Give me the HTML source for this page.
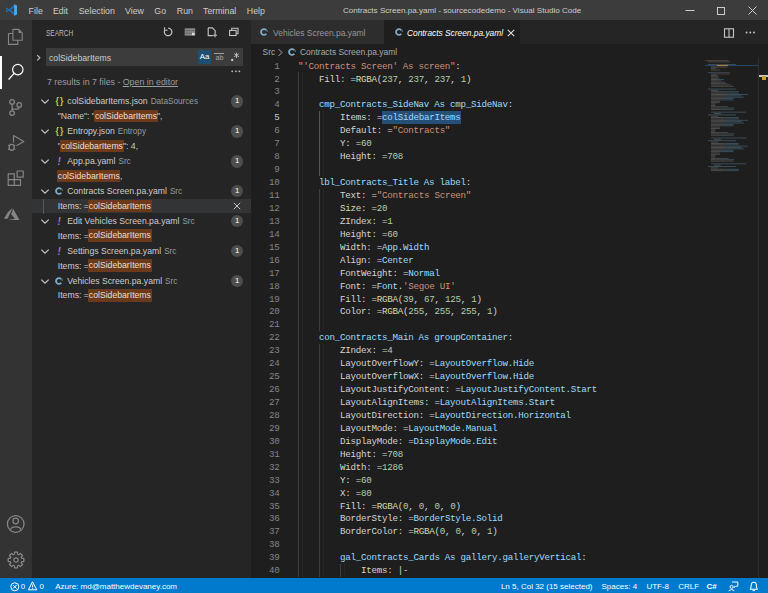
<!DOCTYPE html>
<html><head><meta charset="utf-8">
<style>
*{box-sizing:border-box}
html,body{margin:0;padding:0}
body{width:768px;height:593px;overflow:hidden;position:relative;background:#1e1e1e;font-family:"Liberation Sans",sans-serif;}
.a{position:absolute;white-space:nowrap}
#title{left:0;top:0;width:768px;height:20px;background:#3c3c3c}
.menu{position:absolute;top:0.7px;height:20px;line-height:20px;font-size:8.8px;color:#cccccc}
#act{left:0;top:20px;width:32px;height:558px;background:#333333}
#side{left:32px;top:20px;width:219px;height:558px;background:#252526}
#tabs{left:251px;top:20px;width:517px;height:23.5px;background:#252526}
#status{left:0;top:578px;width:768px;height:15px;background:#007acc}
.st{position:absolute;top:579px;height:15px;line-height:15px;font-size:8px;color:#ffffff}
.ln{position:absolute;left:252px;width:27.6px;text-align:right;height:12.94px;line-height:12.94px;font-family:"Liberation Mono",monospace;font-size:9.2px;letter-spacing:-0.27px;padding-top:1.3px;color:#858585}
.ln.act{color:#c6c6c6}
.cl{position:absolute;height:12.94px;line-height:12.94px;font-family:"Liberation Mono",monospace;font-size:9.2px;letter-spacing:-0.27px;padding-top:1.3px;white-space:pre;color:#d4d4d4}
.k{color:#9cdcfe}.w{color:#d4d4d4}.s{color:#ce9178}.n{color:#b5cea8}.f{color:#dcdcaa}
.g{position:absolute;width:1px;background:#3e3e3e}
.ga{position:absolute;width:1px;background:#555555}
.g2{position:absolute;width:1px;background:#262626}
.tr{position:absolute;left:32px;width:219px;height:15px;line-height:15px;font-size:8.67px;color:#cccccc;white-space:nowrap}
.desc{color:#9b9b9b;font-size:8.2px;margin-left:3px}
.hl{background:#6b3a1a;color:#eadfd5;padding:1.2px 0.6px;margin:0 -0.6px}
.badge{position:absolute;left:231px;width:12.4px;height:12.4px;border-radius:50%;background:#4d4d4d;color:#fff;font-size:7.8px;line-height:12.4px;text-align:center}
.chev{position:absolute;left:41px;top:0}
</style></head><body>
<!-- title bar -->
<div id="title" class="a"></div>
<svg class="a" style="left:5px;top:4.3px" width="13" height="12" viewBox="0 0 100 100">
 <path d="M77 3 L30 44 L11 29 L4 33 L4 67 L11 71 L30 56 L77 97 L77 72 L45 50 L77 28 Z M11 40 L21 50 L11 60 Z" fill="#1e6fb4" fill-rule="evenodd"/>
 <path d="M72 2 L96 12 L96 88 L72 98 Z" fill="#4ba6ea"/>
</svg>
<div class="menu" style="left:28.6px">File</div>
<div class="menu" style="left:52.9px">Edit</div>
<div class="menu" style="left:78.7px">Selection</div>
<div class="menu" style="left:125px">View</div>
<div class="menu" style="left:154.3px">Go</div>
<div class="menu" style="left:176.8px">Run</div>
<div class="menu" style="left:203px">Terminal</div>
<div class="menu" style="left:246.8px">Help</div>
<div class="menu" style="left:343px;font-size:8.1px">Contracts Screen.pa.yaml - sourcecodedemo - Visual Studio Code</div>
<svg class="a" style="left:680px;top:0" width="88" height="20">
 <line x1="5.5" y1="10.5" x2="14.5" y2="10.5" stroke="#cccccc" stroke-width="1"/>
 <rect x="37.5" y="7.5" width="7" height="7" fill="none" stroke="#cccccc" stroke-width="1"/>
 <path d="M68.5 6.5 L76.5 14.5 M76.5 6.5 L68.5 14.5" stroke="#cccccc" stroke-width="1"/>
</svg>

<!-- activity bar -->
<div id="act" class="a"></div>
<div class="a" style="left:0;top:56px;width:1.5px;height:32.5px;background:#ffffff"></div>
<svg class="a" style="left:0;top:20px" width="32" height="560" viewBox="0 20 32 560" fill="none" stroke="#858585" stroke-width="1.1">
 <!-- explorer -->
 <path d="M12.9 29.4 H18.8 L22.2 32.8 V40.2 H12.9 Z" stroke-linejoin="round"/><path d="M18.5 29.6 L22 33 H18.5 Z" fill="#858585" stroke="none"/>
 <path d="M12.9 33.5 H8.5 V44.4 H17.8 V40.2" stroke-linejoin="round"/>
 <!-- search (active) -->
 <g stroke="#ffffff" stroke-width="1.2"><circle cx="17.8" cy="69.6" r="5.2"/><path d="M14.1 73.3 L8.6 79.5"/></g>
 <!-- source control -->
 <g stroke-width="1.3"><circle cx="12.1" cy="101.9" r="2.3"/><circle cx="12.1" cy="113.1" r="2.3"/><circle cx="19.2" cy="104.9" r="2.3"/>
 <path d="M12.1 104.2 V110.8 M19.2 107.2 V107.6 Q19.2 109.2 17.4 109.2 H13.9 Q12.1 109.2 12.1 110.8"/></g>
 <!-- run debug -->
 <path d="M13.5 142.5 V135.5 L23.8 141.5 L16.5 145.8" stroke-width="1.2" stroke-linejoin="round"/>
 <ellipse cx="11.7" cy="147.3" rx="2.6" ry="3" stroke-width="1.3"/><path d="M8 145 L9.5 146 M8 149.5 L9.3 148.8 M15.4 145 L13.9 146 M15.4 149.5 L14.1 148.8 M10 143.8 L11 144.8 M13.4 143.8 L12.4 144.8" stroke-width="1"/>
 <!-- extensions -->
 <path d="M8.2 173.8 H14.3 V185.3 H8.2 Z M8.2 179.6 H20.5 V185.3 H14.3 M17.1 171 H23.2 V177.1 H17.1 Z" stroke-width="1.2" stroke-linejoin="round"/>
 <!-- account -->
 <g stroke-width="1.3"><circle cx="15.7" cy="524" r="8.3"/><circle cx="15.7" cy="521" r="2.8"/>
 <path d="M10.6 529.7 C11.5 526 19.9 526 20.8 529.7"/></g>
</svg>
<svg class="a" style="left:4px;top:207.8px" width="15.6" height="12.1" viewBox="0 2.7 24 18.6">
 <path d="M5.483 21.3H24L14.025 4.013l-3.038 8.347 5.836 6.938L5.483 21.3zM13.23 2.7L6.105 8.677 0 19.253h5.505v.014L13.23 2.7z" fill="#858585"/>
</svg>
<svg class="a" style="left:5.5px;top:549.8px" width="20" height="20" viewBox="0 0 20 20">
 <path d="M15.80 8.45 L17.85 8.47 L17.85 11.53 L15.80 11.55 L15.20 13.00 L16.63 14.47 L14.47 16.63 L13.00 15.20 L11.55 15.80 L11.53 17.85 L8.47 17.85 L8.45 15.80 L7.00 15.20 L5.53 16.63 L3.37 14.47 L4.80 13.00 L4.20 11.55 L2.15 11.53 L2.15 8.47 L4.20 8.45 L4.80 7.00 L3.37 5.53 L5.53 3.37 L7.00 4.80 L8.45 4.20 L8.47 2.15 L11.53 2.15 L11.55 4.20 L13.00 4.80 L14.47 3.37 L16.63 5.53 L15.20 7.00 Z" fill="none" stroke="#858585" stroke-width="1.2" stroke-linejoin="round"/>
 <circle cx="10" cy="10" r="2.2" fill="none" stroke="#858585" stroke-width="1.2"/>
</svg>

<!-- sidebar -->
<div id="side" class="a"></div>
<div class="a" style="left:45.7px;top:26.4px;height:14px;line-height:14px;font-size:8.7px;color:#bbbbbb;transform:scaleX(0.75);transform-origin:0 0">SEARCH</div>
<svg class="a" style="left:160px;top:25px" width="85" height="16" viewBox="0 0 85 16" fill="none" stroke="#c5c5c5" stroke-width="1.2">
 <path d="M8.2 3.1 A3.8 3.8 0 1 1 4.9 4.9"/><path d="M4.6 2.2 V5.3 H7.6" stroke-width="1.1"/>
 <rect x="24.7" y="3.3" width="10.5" height="7.3" fill="#8a8a8a" stroke="none"/>
 <path d="M24.7 5.7 H35.2 M24.7 8.2 H35.2" stroke="#5a5a5a" stroke-width="0.8"/>
 <rect x="32" y="7.8" width="2.6" height="2.4" fill="#e0e0e0" stroke="none"/>
 <path d="M48.2 2.9 H52.4 L55.2 5.7 V8.4 M52.8 10.6 H48.2 V2.9" stroke-width="1.1"/><path d="M55 8.2 V12.2 M53 10.2 H57" stroke-width="1.1"/>
 <path d="M71.7 5.3 V3.3 H78 V8.8 H76.2" stroke-width="1.1"/><rect x="69.6" y="5.4" width="6.5" height="5.1" stroke-width="1.1"/>
</svg>
<svg class="a" style="left:34px;top:53px" width="10" height="10" viewBox="0 0 10 10"><path d="M3.2 2.2 L5.9 4.8 L3.2 7.4" fill="none" stroke="#c5c5c5" stroke-width="1.1"/></svg>
<div class="a" style="left:45.5px;top:48px;width:197.5px;height:17.5px;background:#3c3c3c"></div>
<div class="a" style="left:49px;top:49.6px;height:17.5px;line-height:17.5px;font-size:8.67px;color:#cccccc">colSidebarItems</div>
<div class="a" style="left:197.5px;top:49.5px;width:13.5px;height:14px;background:#1f4f70"></div>
<div class="a" style="left:198.5px;top:49px;width:12px;height:15px;line-height:15px;font-size:7.8px;color:#ffffff;text-align:center">Aa</div>
<div class="a" style="left:214px;top:53px;width:10px;height:1px;background:#a0a0a0"></div>
<div class="a" style="left:214px;top:49px;width:11px;height:14px;line-height:14px;font-size:7.2px;color:#a8a8a8;text-align:center;padding-top:1.5px">ab</div>
<svg class="a" style="left:228px;top:51px" width="14" height="12"><circle cx="4.2" cy="9" r="1.2" fill="#c5c5c5"/><path d="M8.5 1.5 V7 M6.2 2.8 L10.8 5.7 M10.8 2.8 L6.2 5.7" stroke="#c5c5c5" stroke-width="0.9"/></svg>
<svg class="a" style="left:229px;top:69px" width="14" height="5"><circle cx="3.2" cy="2.3" r="0.9" fill="#c5c5c5"/><circle cx="7" cy="2.3" r="0.9" fill="#c5c5c5"/><circle cx="10.4" cy="2.3" r="0.9" fill="#c5c5c5"/></svg>
<div class="a" style="left:47px;top:75px;height:15px;line-height:15px;font-size:8.8px;color:#9d9d9d">7 results in 7 files - <span style="color:#9d9d9d;text-decoration:underline">Open in editor</span></div>

<svg class="a" style="left:40px;top:96.98px" width="10" height="9" viewBox="0 0 10 9"><path d="M1.3 2.6 L5 6.2 L8.7 2.6" fill="none" stroke="#c5c5c5" stroke-width="1.25"/></svg>
<div class="a" style="left:55.5px;top:93.98px;height:15px;line-height:15px;font-size:8.5px;font-weight:bold;letter-spacing:1.2px;color:#cbcb41">{}</div>
<div class="tr" style="left:67.3px;top:94.00px">colSidebarItems.json<span class="desc">DataSources</span></div>
<div class="badge" style="top:95.28px">1</div>
<div class="tr" style="left:57.8px;top:108.96px">"Name": "<span class="hl">colSidebarItems</span>",</div>
<svg class="a" style="left:40px;top:126.90px" width="10" height="9" viewBox="0 0 10 9"><path d="M1.3 2.6 L5 6.2 L8.7 2.6" fill="none" stroke="#c5c5c5" stroke-width="1.25"/></svg>
<div class="a" style="left:55.5px;top:123.90px;height:15px;line-height:15px;font-size:8.5px;font-weight:bold;letter-spacing:1.2px;color:#cbcb41">{}</div>
<div class="tr" style="left:67.3px;top:123.92px">Entropy.json<span class="desc">Entropy</span></div>
<div class="badge" style="top:125.20px">1</div>
<div class="tr" style="left:57.8px;top:138.88px">"<span class="hl">colSidebarItems</span>": 4,</div>
<svg class="a" style="left:40px;top:156.82px" width="10" height="9" viewBox="0 0 10 9"><path d="M1.3 2.6 L5 6.2 L8.7 2.6" fill="none" stroke="#c5c5c5" stroke-width="1.25"/></svg>
<div class="a" style="left:57.5px;top:153.82px;height:15px;line-height:15px;font-size:10px;font-style:italic;font-weight:bold;color:#a074c4">!</div>
<div class="tr" style="left:67.3px;top:153.84px">App.pa.yaml<span class="desc">Src</span></div>
<div class="badge" style="top:155.12px">1</div>
<div class="tr" style="left:57.8px;top:168.80px"><span class="hl">colSidebarItems</span>,</div>
<svg class="a" style="left:40px;top:186.74px" width="10" height="9" viewBox="0 0 10 9"><path d="M1.3 2.6 L5 6.2 L8.7 2.6" fill="none" stroke="#c5c5c5" stroke-width="1.25"/></svg>
<svg class="a" style="left:53.60px;top:186.24px" width="10" height="10" viewBox="0 0 10 10"><path d="M7.3 3.3 A2.9 2.9 0 1 0 7.3 6.7" fill="none" stroke="#7fa9c4" stroke-width="1.9"/><rect x="7.6" y="3.4" width="1.3" height="1.2" fill="#6f98b2"/></svg>
<div class="tr" style="left:67.3px;top:183.76px">Contracts Screen.pa.yaml<span class="desc">Src</span></div>
<div class="badge" style="top:185.04px">1</div>
<div class="a" style="left:32px;top:198.52px;width:219px;height:14.9px;background:#333436"></div>
<div class="a" style="left:43px;top:198.72px;width:1px;height:15px;background:#585858"></div>
<svg class="a" style="left:232.5px;top:202.22px" width="8" height="8" viewBox="0 0 8 8"><path d="M0.8 0.8 L7.2 7.2 M7.2 0.8 L0.8 7.2" stroke="#c5c5c5" stroke-width="1"/></svg>
<div class="tr" style="left:57.8px;top:198.72px">Items: =<span class="hl">colSidebarItems</span></div>
<svg class="a" style="left:40px;top:216.66px" width="10" height="9" viewBox="0 0 10 9"><path d="M1.3 2.6 L5 6.2 L8.7 2.6" fill="none" stroke="#c5c5c5" stroke-width="1.25"/></svg>
<div class="a" style="left:57.5px;top:213.66px;height:15px;line-height:15px;font-size:10px;font-style:italic;font-weight:bold;color:#a074c4">!</div>
<div class="tr" style="left:67.3px;top:213.68px">Edit Vehicles Screen.pa.yaml<span class="desc">Src</span></div>
<div class="badge" style="top:214.96px">1</div>
<div class="tr" style="left:57.8px;top:228.64px">Items: =<span class="hl">colSidebarItems</span></div>
<svg class="a" style="left:40px;top:246.58px" width="10" height="9" viewBox="0 0 10 9"><path d="M1.3 2.6 L5 6.2 L8.7 2.6" fill="none" stroke="#c5c5c5" stroke-width="1.25"/></svg>
<div class="a" style="left:57.5px;top:243.58px;height:15px;line-height:15px;font-size:10px;font-style:italic;font-weight:bold;color:#a074c4">!</div>
<div class="tr" style="left:67.3px;top:243.60px">Settings Screen.pa.yaml<span class="desc">Src</span></div>
<div class="badge" style="top:244.88px">1</div>
<div class="tr" style="left:57.8px;top:258.56px">Items: =<span class="hl">colSidebarItems</span></div>
<svg class="a" style="left:40px;top:276.50px" width="10" height="9" viewBox="0 0 10 9"><path d="M1.3 2.6 L5 6.2 L8.7 2.6" fill="none" stroke="#c5c5c5" stroke-width="1.25"/></svg>
<svg class="a" style="left:53.60px;top:276.00px" width="10" height="10" viewBox="0 0 10 10"><path d="M7.3 3.3 A2.9 2.9 0 1 0 7.3 6.7" fill="none" stroke="#7fa9c4" stroke-width="1.9"/><rect x="7.6" y="3.4" width="1.3" height="1.2" fill="#6f98b2"/></svg>
<div class="tr" style="left:67.3px;top:273.52px">Vehicles Screen.pa.yaml<span class="desc">Src</span></div>
<div class="badge" style="top:274.80px">1</div>
<div class="tr" style="left:57.8px;top:288.48px">Items: =<span class="hl">colSidebarItems</span></div>

<!-- tabs -->
<div id="tabs" class="a"></div>
<div class="a" style="left:251px;top:20px;width:133.4px;height:23.5px;background:#2d2d2d"></div>
<div class="a" style="left:384.4px;top:20px;width:136px;height:23.5px;background:#1e1e1e"></div>

<svg class="a" style="left:259.30px;top:27.00px" width="10" height="10" viewBox="0 0 10 10"><path d="M7.3 3.3 A2.9 2.9 0 1 0 7.3 6.7" fill="none" stroke="#7fa9c4" stroke-width="1.9"/><rect x="7.6" y="3.4" width="1.3" height="1.2" fill="#6f98b2"/></svg>
<div class="a" style="left:273.1px;top:25px;height:16px;line-height:16px;font-size:8.45px;color:#969696">Vehicles Screen.pa.yaml</div>
<svg class="a" style="left:393.60px;top:27.00px" width="10" height="10" viewBox="0 0 10 10"><path d="M7.3 3.3 A2.9 2.9 0 1 0 7.3 6.7" fill="none" stroke="#7fa9c4" stroke-width="1.9"/><rect x="7.6" y="3.4" width="1.3" height="1.2" fill="#6f98b2"/></svg>
<div class="a" style="left:407px;top:25px;height:16px;line-height:16px;font-size:8.35px;font-style:italic;color:#ffffff">Contracts Screen.pa.yaml</div>
<svg class="a" style="left:506.8px;top:29px" width="8" height="8" viewBox="0 0 8 8"><path d="M0.8 0.8 L7.2 7.2 M7.2 0.8 L0.8 7.2" stroke="#dddddd" stroke-width="1.15"/></svg>
<svg class="a" style="left:723px;top:27.5px" width="12" height="10" viewBox="0 0 12 10"><rect x="1.5" y="0.8" width="9" height="8.4" fill="none" stroke="#c5c5c5" stroke-width="1.1"/><path d="M6 0.8 V9.2" stroke="#c5c5c5" stroke-width="1.1"/></svg>

<div class="a" style="left:262.6px;top:44.5px;height:15px;line-height:15px;font-size:8.45px;color:#a9a9a9">Src</div>
<svg class="a" style="left:277px;top:48px" width="7" height="9" viewBox="0 0 7 9"><path d="M1.5 1 L5 4.5 L1.5 8" fill="none" stroke="#a9a9a9" stroke-width="1"/></svg>
<svg class="a" style="left:286.80px;top:46.80px" width="10" height="10" viewBox="0 0 10 10"><path d="M7.3 3.3 A2.9 2.9 0 1 0 7.3 6.7" fill="none" stroke="#7fa9c4" stroke-width="1.9"/><rect x="7.6" y="3.4" width="1.3" height="1.2" fill="#6f98b2"/></svg>
<div class="a" style="left:300px;top:44.5px;height:15px;line-height:15px;font-size:8.45px;color:#a9a9a9">Contracts Screen.pa.yaml</div>

<svg class="a" style="left:744px;top:30px" width="14" height="5"><circle cx="2.6" cy="2.5" r="0.95" fill="#c5c5c5"/><circle cx="6.3" cy="2.5" r="0.95" fill="#c5c5c5"/><circle cx="10" cy="2.5" r="0.95" fill="#c5c5c5"/></svg>

<!-- editor -->
<div class="g" style="left:297.50px;top:72.24px;height:504.66px"></div>
<div class="g2" style="left:302.00px;top:72.24px;height:504.66px"></div>
<div class="ga" style="left:318.50px;top:111.06px;height:64.70px"></div>
<div class="g2" style="left:323.00px;top:111.06px;height:64.70px"></div>
<div class="g" style="left:318.50px;top:188.70px;height:142.34px"></div>
<div class="g2" style="left:323.00px;top:188.70px;height:142.34px"></div>
<div class="g" style="left:318.50px;top:343.98px;height:232.92px"></div>
<div class="g2" style="left:323.00px;top:343.98px;height:232.92px"></div>
<div class="g" style="left:339.50px;top:563.96px;height:12.94px"></div>
<div class="g2" style="left:344.00px;top:563.96px;height:12.94px"></div>
<div class="a" style="left:382px;top:111.1px;width:78.75px;height:12.94px;background:#264f78"></div>
<div class="ln" style="top:59.30px">1</div>
<div class="cl" style="top:59.30px;left:298.00px"><span class="s">"'Contracts Screen' As screen"</span><span class="w">:</span></div>
<div class="ln" style="top:72.24px">2</div>
<div class="cl" style="top:72.24px;left:319.00px"><span class="w">Fill: </span><span class="w">=</span><span class="f">RGBA</span><span class="w">(</span><span class="n">237</span><span class="w">, </span><span class="n">237</span><span class="w">, </span><span class="n">237</span><span class="w">, </span><span class="n">1</span><span class="w">)</span></div>
<div class="ln" style="top:85.18px">3</div>
<div class="ln" style="top:98.12px">4</div>
<div class="cl" style="top:98.12px;left:319.00px"><span class="k">cmp_Contracts_SideNav As cmp_SideNav</span><span class="w">:</span></div>
<div class="ln act" style="top:111.06px">5</div>
<div class="cl" style="top:111.06px;left:340.00px"><span class="w">Items: =</span><span class="k">colSidebarItems</span></div>
<div class="ln" style="top:124.00px">6</div>
<div class="cl" style="top:124.00px;left:340.00px"><span class="w">Default: =</span><span class="s">"Contracts"</span></div>
<div class="ln" style="top:136.94px">7</div>
<div class="cl" style="top:136.94px;left:340.00px"><span class="w">Y: =</span><span class="n">60</span></div>
<div class="ln" style="top:149.88px">8</div>
<div class="cl" style="top:149.88px;left:340.00px"><span class="w">Height: =</span><span class="n">708</span></div>
<div class="ln" style="top:162.82px">9</div>
<div class="ln" style="top:175.76px">10</div>
<div class="cl" style="top:175.76px;left:319.00px"><span class="k">lbl_Contracts_Title As label</span><span class="w">:</span></div>
<div class="ln" style="top:188.70px">11</div>
<div class="cl" style="top:188.70px;left:340.00px"><span class="w">Text: =</span><span class="s">"Contracts Screen"</span></div>
<div class="ln" style="top:201.64px">12</div>
<div class="cl" style="top:201.64px;left:340.00px"><span class="w">Size: =</span><span class="n">20</span></div>
<div class="ln" style="top:214.58px">13</div>
<div class="cl" style="top:214.58px;left:340.00px"><span class="w">ZIndex: =</span><span class="n">1</span></div>
<div class="ln" style="top:227.52px">14</div>
<div class="cl" style="top:227.52px;left:340.00px"><span class="w">Height: =</span><span class="n">60</span></div>
<div class="ln" style="top:240.46px">15</div>
<div class="cl" style="top:240.46px;left:340.00px"><span class="w">Width: =</span><span class="k">App.Width</span></div>
<div class="ln" style="top:253.40px">16</div>
<div class="cl" style="top:253.40px;left:340.00px"><span class="w">Align: =</span><span class="k">Center</span></div>
<div class="ln" style="top:266.34px">17</div>
<div class="cl" style="top:266.34px;left:340.00px"><span class="w">FontWeight: =</span><span class="k">Normal</span></div>
<div class="ln" style="top:279.28px">18</div>
<div class="cl" style="top:279.28px;left:340.00px"><span class="w">Font: =</span><span class="k">Font</span><span class="w">.</span><span class="s">'Segoe UI'</span></div>
<div class="ln" style="top:292.22px">19</div>
<div class="cl" style="top:292.22px;left:340.00px"><span class="w">Fill: </span><span class="w">=</span><span class="f">RGBA</span><span class="w">(</span><span class="n">39</span><span class="w">, </span><span class="n">67</span><span class="w">, </span><span class="n">125</span><span class="w">, </span><span class="n">1</span><span class="w">)</span></div>
<div class="ln" style="top:305.16px">20</div>
<div class="cl" style="top:305.16px;left:340.00px"><span class="w">Color: </span><span class="w">=</span><span class="f">RGBA</span><span class="w">(</span><span class="n">255</span><span class="w">, </span><span class="n">255</span><span class="w">, </span><span class="n">255</span><span class="w">, </span><span class="n">1</span><span class="w">)</span></div>
<div class="ln" style="top:318.10px">21</div>
<div class="ln" style="top:331.04px">22</div>
<div class="cl" style="top:331.04px;left:319.00px"><span class="k">con_Contracts_Main As groupContainer</span><span class="w">:</span></div>
<div class="ln" style="top:343.98px">23</div>
<div class="cl" style="top:343.98px;left:340.00px"><span class="w">ZIndex: =</span><span class="n">4</span></div>
<div class="ln" style="top:356.92px">24</div>
<div class="cl" style="top:356.92px;left:340.00px"><span class="w">LayoutOverflowY: =</span><span class="k">LayoutOverflow.Hide</span></div>
<div class="ln" style="top:369.86px">25</div>
<div class="cl" style="top:369.86px;left:340.00px"><span class="w">LayoutOverflowX: =</span><span class="k">LayoutOverflow.Hide</span></div>
<div class="ln" style="top:382.80px">26</div>
<div class="cl" style="top:382.80px;left:340.00px"><span class="w">LayoutJustifyContent: =</span><span class="k">LayoutJustifyContent.Start</span></div>
<div class="ln" style="top:395.74px">27</div>
<div class="cl" style="top:395.74px;left:340.00px"><span class="w">LayoutAlignItems: =</span><span class="k">LayoutAlignItems.Start</span></div>
<div class="ln" style="top:408.68px">28</div>
<div class="cl" style="top:408.68px;left:340.00px"><span class="w">LayoutDirection: =</span><span class="k">LayoutDirection.Horizontal</span></div>
<div class="ln" style="top:421.62px">29</div>
<div class="cl" style="top:421.62px;left:340.00px"><span class="w">LayoutMode: =</span><span class="k">LayoutMode.Manual</span></div>
<div class="ln" style="top:434.56px">30</div>
<div class="cl" style="top:434.56px;left:340.00px"><span class="w">DisplayMode: =</span><span class="k">DisplayMode.Edit</span></div>
<div class="ln" style="top:447.50px">31</div>
<div class="cl" style="top:447.50px;left:340.00px"><span class="w">Height: =</span><span class="n">708</span></div>
<div class="ln" style="top:460.44px">32</div>
<div class="cl" style="top:460.44px;left:340.00px"><span class="w">Width: =</span><span class="n">1286</span></div>
<div class="ln" style="top:473.38px">33</div>
<div class="cl" style="top:473.38px;left:340.00px"><span class="w">Y: =</span><span class="n">60</span></div>
<div class="ln" style="top:486.32px">34</div>
<div class="cl" style="top:486.32px;left:340.00px"><span class="w">X: =</span><span class="n">80</span></div>
<div class="ln" style="top:499.26px">35</div>
<div class="cl" style="top:499.26px;left:340.00px"><span class="w">Fill: </span><span class="w">=</span><span class="f">RGBA</span><span class="w">(</span><span class="n">0</span><span class="w">, </span><span class="n">0</span><span class="w">, </span><span class="n">0</span><span class="w">, </span><span class="n">0</span><span class="w">)</span></div>
<div class="ln" style="top:512.20px">36</div>
<div class="cl" style="top:512.20px;left:340.00px"><span class="w">BorderStyle: =</span><span class="k">BorderStyle.Solid</span></div>
<div class="ln" style="top:525.14px">37</div>
<div class="cl" style="top:525.14px;left:340.00px"><span class="w">BorderColor: </span><span class="w">=</span><span class="f">RGBA</span><span class="w">(</span><span class="n">0</span><span class="w">, </span><span class="n">0</span><span class="w">, </span><span class="n">0</span><span class="w">, </span><span class="n">1</span><span class="w">)</span></div>
<div class="ln" style="top:538.08px">38</div>
<div class="ln" style="top:551.02px">39</div>
<div class="cl" style="top:551.02px;left:340.00px"><span class="k">gal_Contracts_Cards As gallery.galleryVertical</span><span class="w">:</span></div>
<div class="ln" style="top:563.96px">40</div>
<div class="cl" style="top:563.96px;left:361.00px"><span class="w">Items: |-</span></div>
<svg class="a" style="left:700px;top:55px" width="68" height="125">
<g transform="translate(-700,-55)" opacity="0.6">
<rect x="705.00" y="60.00" width="22.50" height="0.95" fill="#735245"/>
<rect x="727.50" y="60.00" width="0.75" height="0.95" fill="#6e6e6e"/>
<rect x="708.00" y="61.36" width="4.50" height="0.95" fill="#6e6e6e"/>
<rect x="712.50" y="61.36" width="0.75" height="0.95" fill="#6e6e6e"/>
<rect x="713.25" y="61.36" width="3.00" height="0.95" fill="#73735e"/>
<rect x="716.25" y="61.36" width="0.75" height="0.95" fill="#6e6e6e"/>
<rect x="717.00" y="61.36" width="2.25" height="0.95" fill="#61705c"/>
<rect x="719.25" y="61.36" width="1.50" height="0.95" fill="#6e6e6e"/>
<rect x="720.75" y="61.36" width="2.25" height="0.95" fill="#61705c"/>
<rect x="723.00" y="61.36" width="1.50" height="0.95" fill="#6e6e6e"/>
<rect x="724.50" y="61.36" width="2.25" height="0.95" fill="#61705c"/>
<rect x="726.75" y="61.36" width="1.50" height="0.95" fill="#6e6e6e"/>
<rect x="728.25" y="61.36" width="0.75" height="0.95" fill="#61705c"/>
<rect x="729.00" y="61.36" width="0.75" height="0.95" fill="#6e6e6e"/>
<rect x="708.00" y="64.08" width="27.00" height="0.95" fill="#4f7188"/>
<rect x="735.00" y="64.08" width="0.75" height="0.95" fill="#6e6e6e"/>
<rect x="711.00" y="65.44" width="6.00" height="0.95" fill="#6e6e6e"/>
<rect x="717.00" y="65.44" width="11.25" height="0.95" fill="#4f7188"/>
<rect x="711.00" y="66.80" width="7.50" height="0.95" fill="#6e6e6e"/>
<rect x="718.50" y="66.80" width="8.25" height="0.95" fill="#735245"/>
<rect x="711.00" y="68.16" width="3.00" height="0.95" fill="#6e6e6e"/>
<rect x="714.00" y="68.16" width="1.50" height="0.95" fill="#61705c"/>
<rect x="711.00" y="69.52" width="6.75" height="0.95" fill="#6e6e6e"/>
<rect x="717.75" y="69.52" width="2.25" height="0.95" fill="#61705c"/>
<rect x="708.00" y="72.24" width="21.00" height="0.95" fill="#4f7188"/>
<rect x="729.00" y="72.24" width="0.75" height="0.95" fill="#6e6e6e"/>
<rect x="711.00" y="73.60" width="5.25" height="0.95" fill="#6e6e6e"/>
<rect x="716.25" y="73.60" width="13.50" height="0.95" fill="#735245"/>
<rect x="711.00" y="74.96" width="5.25" height="0.95" fill="#6e6e6e"/>
<rect x="716.25" y="74.96" width="1.50" height="0.95" fill="#61705c"/>
<rect x="711.00" y="76.32" width="6.75" height="0.95" fill="#6e6e6e"/>
<rect x="717.75" y="76.32" width="0.75" height="0.95" fill="#61705c"/>
<rect x="711.00" y="77.68" width="6.75" height="0.95" fill="#6e6e6e"/>
<rect x="717.75" y="77.68" width="1.50" height="0.95" fill="#61705c"/>
<rect x="711.00" y="79.04" width="6.00" height="0.95" fill="#6e6e6e"/>
<rect x="717.00" y="79.04" width="6.75" height="0.95" fill="#4f7188"/>
<rect x="711.00" y="80.40" width="6.00" height="0.95" fill="#6e6e6e"/>
<rect x="717.00" y="80.40" width="4.50" height="0.95" fill="#4f7188"/>
<rect x="711.00" y="81.76" width="9.75" height="0.95" fill="#6e6e6e"/>
<rect x="720.75" y="81.76" width="4.50" height="0.95" fill="#4f7188"/>
<rect x="711.00" y="83.12" width="5.25" height="0.95" fill="#6e6e6e"/>
<rect x="716.25" y="83.12" width="3.00" height="0.95" fill="#4f7188"/>
<rect x="719.25" y="83.12" width="0.75" height="0.95" fill="#6e6e6e"/>
<rect x="720.00" y="83.12" width="7.50" height="0.95" fill="#735245"/>
<rect x="711.00" y="84.48" width="4.50" height="0.95" fill="#6e6e6e"/>
<rect x="715.50" y="84.48" width="0.75" height="0.95" fill="#6e6e6e"/>
<rect x="716.25" y="84.48" width="3.00" height="0.95" fill="#73735e"/>
<rect x="719.25" y="84.48" width="0.75" height="0.95" fill="#6e6e6e"/>
<rect x="720.00" y="84.48" width="1.50" height="0.95" fill="#61705c"/>
<rect x="721.50" y="84.48" width="1.50" height="0.95" fill="#6e6e6e"/>
<rect x="723.00" y="84.48" width="1.50" height="0.95" fill="#61705c"/>
<rect x="724.50" y="84.48" width="1.50" height="0.95" fill="#6e6e6e"/>
<rect x="726.00" y="84.48" width="2.25" height="0.95" fill="#61705c"/>
<rect x="728.25" y="84.48" width="1.50" height="0.95" fill="#6e6e6e"/>
<rect x="729.75" y="84.48" width="0.75" height="0.95" fill="#61705c"/>
<rect x="730.50" y="84.48" width="0.75" height="0.95" fill="#6e6e6e"/>
<rect x="711.00" y="85.84" width="5.25" height="0.95" fill="#6e6e6e"/>
<rect x="716.25" y="85.84" width="0.75" height="0.95" fill="#6e6e6e"/>
<rect x="717.00" y="85.84" width="3.00" height="0.95" fill="#73735e"/>
<rect x="720.00" y="85.84" width="0.75" height="0.95" fill="#6e6e6e"/>
<rect x="720.75" y="85.84" width="2.25" height="0.95" fill="#61705c"/>
<rect x="723.00" y="85.84" width="1.50" height="0.95" fill="#6e6e6e"/>
<rect x="724.50" y="85.84" width="2.25" height="0.95" fill="#61705c"/>
<rect x="726.75" y="85.84" width="1.50" height="0.95" fill="#6e6e6e"/>
<rect x="728.25" y="85.84" width="2.25" height="0.95" fill="#61705c"/>
<rect x="730.50" y="85.84" width="1.50" height="0.95" fill="#6e6e6e"/>
<rect x="732.00" y="85.84" width="0.75" height="0.95" fill="#61705c"/>
<rect x="732.75" y="85.84" width="0.75" height="0.95" fill="#6e6e6e"/>
<rect x="708.00" y="88.56" width="27.00" height="0.95" fill="#4f7188"/>
<rect x="735.00" y="88.56" width="0.75" height="0.95" fill="#6e6e6e"/>
<rect x="711.00" y="89.92" width="6.75" height="0.95" fill="#6e6e6e"/>
<rect x="717.75" y="89.92" width="0.75" height="0.95" fill="#61705c"/>
<rect x="711.00" y="91.28" width="13.50" height="0.95" fill="#6e6e6e"/>
<rect x="724.50" y="91.28" width="14.25" height="0.95" fill="#4f7188"/>
<rect x="711.00" y="92.64" width="13.50" height="0.95" fill="#6e6e6e"/>
<rect x="724.50" y="92.64" width="14.25" height="0.95" fill="#4f7188"/>
<rect x="711.00" y="94.00" width="17.25" height="0.95" fill="#6e6e6e"/>
<rect x="728.25" y="94.00" width="19.50" height="0.95" fill="#4f7188"/>
<rect x="711.00" y="95.36" width="14.25" height="0.95" fill="#6e6e6e"/>
<rect x="725.25" y="95.36" width="16.50" height="0.95" fill="#4f7188"/>
<rect x="711.00" y="96.72" width="13.50" height="0.95" fill="#6e6e6e"/>
<rect x="724.50" y="96.72" width="19.50" height="0.95" fill="#4f7188"/>
<rect x="711.00" y="98.08" width="9.75" height="0.95" fill="#6e6e6e"/>
<rect x="720.75" y="98.08" width="12.75" height="0.95" fill="#4f7188"/>
<rect x="711.00" y="99.44" width="10.50" height="0.95" fill="#6e6e6e"/>
<rect x="721.50" y="99.44" width="12.00" height="0.95" fill="#4f7188"/>
<rect x="711.00" y="100.80" width="6.75" height="0.95" fill="#6e6e6e"/>
<rect x="717.75" y="100.80" width="2.25" height="0.95" fill="#61705c"/>
<rect x="711.00" y="102.16" width="6.00" height="0.95" fill="#6e6e6e"/>
<rect x="717.00" y="102.16" width="3.00" height="0.95" fill="#61705c"/>
<rect x="711.00" y="103.52" width="3.00" height="0.95" fill="#6e6e6e"/>
<rect x="714.00" y="103.52" width="1.50" height="0.95" fill="#61705c"/>
<rect x="711.00" y="104.88" width="3.00" height="0.95" fill="#6e6e6e"/>
<rect x="714.00" y="104.88" width="1.50" height="0.95" fill="#61705c"/>
<rect x="711.00" y="106.24" width="4.50" height="0.95" fill="#6e6e6e"/>
<rect x="715.50" y="106.24" width="0.75" height="0.95" fill="#6e6e6e"/>
<rect x="716.25" y="106.24" width="3.00" height="0.95" fill="#73735e"/>
<rect x="719.25" y="106.24" width="0.75" height="0.95" fill="#6e6e6e"/>
<rect x="720.00" y="106.24" width="0.75" height="0.95" fill="#61705c"/>
<rect x="720.75" y="106.24" width="1.50" height="0.95" fill="#6e6e6e"/>
<rect x="722.25" y="106.24" width="0.75" height="0.95" fill="#61705c"/>
<rect x="723.00" y="106.24" width="1.50" height="0.95" fill="#6e6e6e"/>
<rect x="724.50" y="106.24" width="0.75" height="0.95" fill="#61705c"/>
<rect x="725.25" y="106.24" width="1.50" height="0.95" fill="#6e6e6e"/>
<rect x="726.75" y="106.24" width="0.75" height="0.95" fill="#61705c"/>
<rect x="727.50" y="106.24" width="0.75" height="0.95" fill="#6e6e6e"/>
<rect x="711.00" y="107.60" width="10.50" height="0.95" fill="#6e6e6e"/>
<rect x="721.50" y="107.60" width="12.75" height="0.95" fill="#4f7188"/>
<rect x="711.00" y="108.96" width="9.75" height="0.95" fill="#6e6e6e"/>
<rect x="720.75" y="108.96" width="0.75" height="0.95" fill="#6e6e6e"/>
<rect x="721.50" y="108.96" width="3.00" height="0.95" fill="#73735e"/>
<rect x="724.50" y="108.96" width="0.75" height="0.95" fill="#6e6e6e"/>
<rect x="725.25" y="108.96" width="0.75" height="0.95" fill="#61705c"/>
<rect x="726.00" y="108.96" width="1.50" height="0.95" fill="#6e6e6e"/>
<rect x="727.50" y="108.96" width="0.75" height="0.95" fill="#61705c"/>
<rect x="728.25" y="108.96" width="1.50" height="0.95" fill="#6e6e6e"/>
<rect x="729.75" y="108.96" width="0.75" height="0.95" fill="#61705c"/>
<rect x="730.50" y="108.96" width="1.50" height="0.95" fill="#6e6e6e"/>
<rect x="732.00" y="108.96" width="0.75" height="0.95" fill="#61705c"/>
<rect x="732.75" y="108.96" width="0.75" height="0.95" fill="#6e6e6e"/>
<rect x="711.00" y="111.68" width="34.50" height="0.95" fill="#4f7188"/>
<rect x="745.50" y="111.68" width="0.75" height="0.95" fill="#6e6e6e"/>
<rect x="714.00" y="113.04" width="6.75" height="0.95" fill="#6e6e6e"/>
<rect x="708.00" y="114.40" width="27.00" height="0.95" fill="#4f7188"/>
<rect x="735.00" y="114.40" width="0.75" height="0.95" fill="#6e6e6e"/>
<rect x="711.00" y="115.76" width="6.75" height="0.95" fill="#6e6e6e"/>
<rect x="717.75" y="115.76" width="0.75" height="0.95" fill="#61705c"/>
<rect x="711.00" y="117.12" width="13.50" height="0.95" fill="#6e6e6e"/>
<rect x="724.50" y="117.12" width="14.25" height="0.95" fill="#4f7188"/>
<rect x="711.00" y="118.48" width="13.50" height="0.95" fill="#6e6e6e"/>
<rect x="724.50" y="118.48" width="14.25" height="0.95" fill="#4f7188"/>
<rect x="711.00" y="119.84" width="17.25" height="0.95" fill="#6e6e6e"/>
<rect x="728.25" y="119.84" width="19.50" height="0.95" fill="#4f7188"/>
<rect x="711.00" y="121.20" width="14.25" height="0.95" fill="#6e6e6e"/>
<rect x="725.25" y="121.20" width="16.50" height="0.95" fill="#4f7188"/>
<rect x="711.00" y="122.56" width="13.50" height="0.95" fill="#6e6e6e"/>
<rect x="724.50" y="122.56" width="19.50" height="0.95" fill="#4f7188"/>
<rect x="711.00" y="123.92" width="9.75" height="0.95" fill="#6e6e6e"/>
<rect x="720.75" y="123.92" width="12.75" height="0.95" fill="#4f7188"/>
<rect x="711.00" y="125.28" width="10.50" height="0.95" fill="#6e6e6e"/>
<rect x="721.50" y="125.28" width="12.00" height="0.95" fill="#4f7188"/>
<rect x="711.00" y="126.64" width="6.75" height="0.95" fill="#6e6e6e"/>
<rect x="717.75" y="126.64" width="2.25" height="0.95" fill="#61705c"/>
<rect x="711.00" y="128.00" width="6.00" height="0.95" fill="#6e6e6e"/>
<rect x="717.00" y="128.00" width="3.00" height="0.95" fill="#61705c"/>
<rect x="711.00" y="129.36" width="3.00" height="0.95" fill="#6e6e6e"/>
<rect x="714.00" y="129.36" width="1.50" height="0.95" fill="#61705c"/>
<rect x="711.00" y="130.72" width="3.00" height="0.95" fill="#6e6e6e"/>
<rect x="714.00" y="130.72" width="1.50" height="0.95" fill="#61705c"/>
<rect x="711.00" y="132.08" width="4.50" height="0.95" fill="#6e6e6e"/>
<rect x="715.50" y="132.08" width="0.75" height="0.95" fill="#6e6e6e"/>
<rect x="716.25" y="132.08" width="3.00" height="0.95" fill="#73735e"/>
<rect x="719.25" y="132.08" width="0.75" height="0.95" fill="#6e6e6e"/>
<rect x="720.00" y="132.08" width="0.75" height="0.95" fill="#61705c"/>
<rect x="720.75" y="132.08" width="1.50" height="0.95" fill="#6e6e6e"/>
<rect x="722.25" y="132.08" width="0.75" height="0.95" fill="#61705c"/>
<rect x="723.00" y="132.08" width="1.50" height="0.95" fill="#6e6e6e"/>
<rect x="724.50" y="132.08" width="0.75" height="0.95" fill="#61705c"/>
<rect x="725.25" y="132.08" width="1.50" height="0.95" fill="#6e6e6e"/>
<rect x="726.75" y="132.08" width="0.75" height="0.95" fill="#61705c"/>
<rect x="727.50" y="132.08" width="0.75" height="0.95" fill="#6e6e6e"/>
<rect x="711.00" y="133.44" width="10.50" height="0.95" fill="#6e6e6e"/>
<rect x="721.50" y="133.44" width="12.75" height="0.95" fill="#4f7188"/>
<rect x="711.00" y="134.80" width="9.75" height="0.95" fill="#6e6e6e"/>
<rect x="720.75" y="134.80" width="0.75" height="0.95" fill="#6e6e6e"/>
<rect x="721.50" y="134.80" width="3.00" height="0.95" fill="#73735e"/>
<rect x="724.50" y="134.80" width="0.75" height="0.95" fill="#6e6e6e"/>
<rect x="725.25" y="134.80" width="0.75" height="0.95" fill="#61705c"/>
<rect x="726.00" y="134.80" width="1.50" height="0.95" fill="#6e6e6e"/>
<rect x="727.50" y="134.80" width="0.75" height="0.95" fill="#61705c"/>
<rect x="728.25" y="134.80" width="1.50" height="0.95" fill="#6e6e6e"/>
<rect x="729.75" y="134.80" width="0.75" height="0.95" fill="#61705c"/>
<rect x="730.50" y="134.80" width="1.50" height="0.95" fill="#6e6e6e"/>
<rect x="732.00" y="134.80" width="0.75" height="0.95" fill="#61705c"/>
<rect x="732.75" y="134.80" width="0.75" height="0.95" fill="#6e6e6e"/>
<rect x="711.00" y="137.52" width="34.50" height="0.95" fill="#4f7188"/>
<rect x="745.50" y="137.52" width="0.75" height="0.95" fill="#6e6e6e"/>
<rect x="714.00" y="138.88" width="6.75" height="0.95" fill="#6e6e6e"/>
<rect x="708.00" y="140.24" width="27.00" height="0.95" fill="#4f7188"/>
<rect x="735.00" y="140.24" width="0.75" height="0.95" fill="#6e6e6e"/>
<rect x="711.00" y="141.60" width="6.75" height="0.95" fill="#6e6e6e"/>
<rect x="717.75" y="141.60" width="0.75" height="0.95" fill="#61705c"/>
<rect x="711.00" y="142.96" width="13.50" height="0.95" fill="#6e6e6e"/>
<rect x="724.50" y="142.96" width="14.25" height="0.95" fill="#4f7188"/>
<rect x="711.00" y="144.32" width="13.50" height="0.95" fill="#6e6e6e"/>
<rect x="724.50" y="144.32" width="14.25" height="0.95" fill="#4f7188"/>
<rect x="711.00" y="145.68" width="17.25" height="0.95" fill="#6e6e6e"/>
<rect x="728.25" y="145.68" width="19.50" height="0.95" fill="#4f7188"/>
<rect x="711.00" y="147.04" width="14.25" height="0.95" fill="#6e6e6e"/>
<rect x="725.25" y="147.04" width="16.50" height="0.95" fill="#4f7188"/>
<rect x="711.00" y="148.40" width="13.50" height="0.95" fill="#6e6e6e"/>
<rect x="724.50" y="148.40" width="19.50" height="0.95" fill="#4f7188"/>
<rect x="711.00" y="149.76" width="9.75" height="0.95" fill="#6e6e6e"/>
<rect x="720.75" y="149.76" width="12.75" height="0.95" fill="#4f7188"/>
<rect x="711.00" y="151.12" width="10.50" height="0.95" fill="#6e6e6e"/>
<rect x="721.50" y="151.12" width="12.00" height="0.95" fill="#4f7188"/>
<rect x="711.00" y="152.48" width="6.75" height="0.95" fill="#6e6e6e"/>
<rect x="717.75" y="152.48" width="2.25" height="0.95" fill="#61705c"/>
<rect x="711.00" y="153.84" width="6.00" height="0.95" fill="#6e6e6e"/>
<rect x="717.00" y="153.84" width="3.00" height="0.95" fill="#61705c"/>
<rect x="711.00" y="155.20" width="3.00" height="0.95" fill="#6e6e6e"/>
<rect x="714.00" y="155.20" width="1.50" height="0.95" fill="#61705c"/>
<rect x="711.00" y="156.56" width="3.00" height="0.95" fill="#6e6e6e"/>
<rect x="714.00" y="156.56" width="1.50" height="0.95" fill="#61705c"/>
<rect x="711.00" y="157.92" width="4.50" height="0.95" fill="#6e6e6e"/>
<rect x="715.50" y="157.92" width="0.75" height="0.95" fill="#6e6e6e"/>
<rect x="716.25" y="157.92" width="3.00" height="0.95" fill="#73735e"/>
<rect x="719.25" y="157.92" width="0.75" height="0.95" fill="#6e6e6e"/>
<rect x="720.00" y="157.92" width="0.75" height="0.95" fill="#61705c"/>
<rect x="720.75" y="157.92" width="1.50" height="0.95" fill="#6e6e6e"/>
<rect x="722.25" y="157.92" width="0.75" height="0.95" fill="#61705c"/>
<rect x="723.00" y="157.92" width="1.50" height="0.95" fill="#6e6e6e"/>
<rect x="724.50" y="157.92" width="0.75" height="0.95" fill="#61705c"/>
<rect x="725.25" y="157.92" width="1.50" height="0.95" fill="#6e6e6e"/>
<rect x="726.75" y="157.92" width="0.75" height="0.95" fill="#61705c"/>
<rect x="727.50" y="157.92" width="0.75" height="0.95" fill="#6e6e6e"/>
<rect x="711.00" y="159.28" width="10.50" height="0.95" fill="#6e6e6e"/>
<rect x="721.50" y="159.28" width="12.75" height="0.95" fill="#4f7188"/>
<rect x="711.00" y="160.64" width="9.75" height="0.95" fill="#6e6e6e"/>
<rect x="720.75" y="160.64" width="0.75" height="0.95" fill="#6e6e6e"/>
<rect x="721.50" y="160.64" width="3.00" height="0.95" fill="#73735e"/>
<rect x="724.50" y="160.64" width="0.75" height="0.95" fill="#6e6e6e"/>
<rect x="725.25" y="160.64" width="0.75" height="0.95" fill="#61705c"/>
<rect x="726.00" y="160.64" width="1.50" height="0.95" fill="#6e6e6e"/>
<rect x="727.50" y="160.64" width="0.75" height="0.95" fill="#61705c"/>
<rect x="728.25" y="160.64" width="1.50" height="0.95" fill="#6e6e6e"/>
<rect x="729.75" y="160.64" width="0.75" height="0.95" fill="#61705c"/>
<rect x="730.50" y="160.64" width="1.50" height="0.95" fill="#6e6e6e"/>
<rect x="732.00" y="160.64" width="0.75" height="0.95" fill="#61705c"/>
<rect x="732.75" y="160.64" width="0.75" height="0.95" fill="#6e6e6e"/>
<rect x="711.00" y="163.36" width="34.50" height="0.95" fill="#4f7188"/>
<rect x="745.50" y="163.36" width="0.75" height="0.95" fill="#6e6e6e"/>
<rect x="714.00" y="164.72" width="6.75" height="0.95" fill="#6e6e6e"/>
<rect x="708.00" y="166.08" width="27.00" height="0.95" fill="#4f7188"/>
<rect x="735.00" y="166.08" width="0.75" height="0.95" fill="#6e6e6e"/>
<rect x="711.00" y="167.44" width="6.75" height="0.95" fill="#6e6e6e"/>
<rect x="717.75" y="167.44" width="0.75" height="0.95" fill="#61705c"/>
<rect x="711.00" y="168.80" width="13.50" height="0.95" fill="#6e6e6e"/>
<rect x="724.50" y="168.80" width="14.25" height="0.95" fill="#4f7188"/>
<rect x="711.00" y="170.16" width="13.50" height="0.95" fill="#6e6e6e"/>
<rect x="724.50" y="170.16" width="14.25" height="0.95" fill="#4f7188"/>
</g>
</svg>
<div class="a" style="left:705px;top:64.8px;width:53px;height:1.2px;background:#264f78;opacity:0.8"></div>
<div class="a" style="left:717px;top:64.6px;width:11.2px;height:1.4px;background:#c07a2a"></div>
<div class="a" style="left:758.2px;top:57px;width:1px;height:521px;background:#2f2f2f"></div>
<div class="a" style="left:759px;top:75px;width:9px;height:1.5px;background:#c8c8c8"></div>
<div class="a" style="left:762px;top:76px;width:4px;height:4px;background:#c9a227"></div>

<!-- status -->
<div id="status" class="a"></div>

<svg class="a" style="left:9.5px;top:581.5px" width="10" height="10" viewBox="0 0 10 10"><circle cx="4.8" cy="4.8" r="4" fill="none" stroke="#fff" stroke-width="1"/><path d="M3 3 L6.6 6.6 M6.6 3 L3 6.6" stroke="#fff" stroke-width="1"/></svg>
<div class="st" style="left:20.8px">0</div>
<svg class="a" style="left:28.3px;top:581px" width="10" height="10" viewBox="0 0 10 10"><path d="M4.5 0.8 L8.8 8.8 H0.4 Z" fill="none" stroke="#fff" stroke-width="1"/><path d="M4.6 3.5 V6.5 M4.6 7.2 V8" stroke="#fff" stroke-width="0.9"/></svg>
<div class="st" style="left:39.6px">0</div>
<div class="st" style="left:55.2px">Azure: md@matthewdevaney.com</div>
<div class="st" style="left:500.9px">Ln 5, Col 32 (15 selected)</div>
<div class="st" style="left:601.5px">Spaces: 4</div>
<div class="st" style="left:646.4px">UTF-8</div>
<div class="st" style="left:678.2px">CRLF</div>
<div class="st" style="left:706.4px;font-weight:bold">C#</div>
<svg class="a" style="left:727.5px;top:581px" width="11" height="11" viewBox="0 0 11 11"><path d="M4 1 H9.8 V5.2 H7.6 L6.2 6.6 V5.2" fill="none" stroke="#fff" stroke-width="0.95"/><circle cx="3.6" cy="5.9" r="1.5" fill="none" stroke="#fff" stroke-width="0.95"/><path d="M0.8 9.8 Q3.6 6.9 6.4 9.8" fill="none" stroke="#fff" stroke-width="0.95"/></svg>
<svg class="a" style="left:748.5px;top:581px" width="10" height="11" viewBox="0 0 10 11"><path d="M1.2 8.2 Q2.2 7.3 2.2 4.6 Q2.2 1.2 4.8 1.2 Q7.4 1.2 7.4 4.6 Q7.4 7.3 8.4 8.2 Z" fill="none" stroke="#fff" stroke-width="1.05" stroke-linejoin="round"/><path d="M3.6 9.6 H6" stroke="#fff" stroke-width="1"/></svg>

</body></html>
